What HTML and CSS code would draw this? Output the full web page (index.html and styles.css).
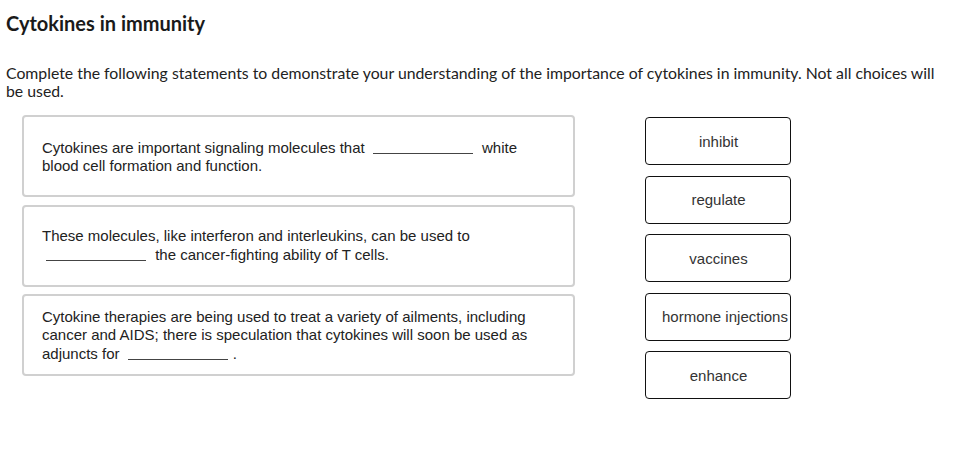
FILE: index.html
```html
<!DOCTYPE html>
<html>
<head>
<meta charset="utf-8">
<link rel="stylesheet" href="styles.css">
</head>
<body>
<div class="page">
  <h1 class="title">Cytokines in immunity</h1>
  <p class="intro">Complete the following statements to demonstrate your understanding of the importance of cytokines in immunity. Not all choices will be used.</p>
  <div class="exercise">
    <div class="statements">
      <div class="statement"><div class="stext">Cytokines are important signaling molecules that <span class="blank"></span> white blood cell formation and function.</div></div>
      <div class="statement"><div class="stext">These molecules, like interferon and interleukins, can be used to <span class="blank"></span> the cancer-fighting ability of T cells.</div></div>
      <div class="statement"><div class="stext">Cytokine therapies are being used to treat a variety of ailments, including cancer and AIDS; there is speculation that cytokines will soon be used as adjuncts for <span class="blank"></span>.</div></div>
    </div>
    <div class="choices">
      <div class="choice"><span>inhibit</span></div>
      <div class="choice"><span>regulate</span></div>
      <div class="choice"><span>vaccines</span></div>
      <div class="choice"><span>hormone injections</span></div>
      <div class="choice"><span>enhance</span></div>
    </div>
  </div>
</div>
</body>
</html>
```

FILE: styles.css
```css
html, body {
  margin: 0;
  padding: 0;
  background: #fff;
}
.page {
  padding: 0 6px;
  width: 945px;
}
.title {
  font-family: "Lato", "Open Sans", sans-serif;
  font-weight: 700;
  font-size: 20px;
  color: #1a1a1a;
  margin: 0;
  padding-top: 11px;
  line-height: 24px;
}
.intro {
  font-family: "Lato", "Open Sans", sans-serif;
  font-size: 15.8px;
  line-height: 18px;
  color: #222;
  margin: 29px 0 0 0;
}
.exercise {
  display: flex;
  align-items: flex-start;
  margin-top: 15px;
  padding-left: 16px;
}
.statements {
  width: 553px;
  display: flex;
  flex-direction: column;
  gap: 7.5px;
}
.statement {
  box-sizing: border-box;
  height: 82px;
  border: 2px solid #d0d0d0;
  border-radius: 4px;
  display: flex;
  align-items: center;
  padding: 0 18px;
}
.stext {
  font-family: "Liberation Sans", Arial, sans-serif;
  font-size: 15px;
  line-height: 18px;
  color: #222;
}
.blank {
  display: inline-block;
  width: 100px;
  height: 14px;
  border-bottom: 1px solid #444;
  margin: 0 5px 0 4px;
  vertical-align: baseline;
  position: relative;
  top: 1px;
}
.choices {
  margin-left: 70px;
  display: flex;
  flex-direction: column;
  gap: 10.5px;
  padding-top: 2px;
}
.choice {
  box-sizing: border-box;
  width: 146px;
  height: 48px;
  border: 1px solid #111;
  border-radius: 4px;
  padding: 0 15px 0 16px;
  display: flex;
  flex-direction: column;
  justify-content: center;
  font-family: "Liberation Sans", Arial, sans-serif;
  font-size: 15px;
  color: #333;
  white-space: nowrap;
}
.choice span {
  display: block;
  text-align: center;
  margin-top: 0;
}
```
